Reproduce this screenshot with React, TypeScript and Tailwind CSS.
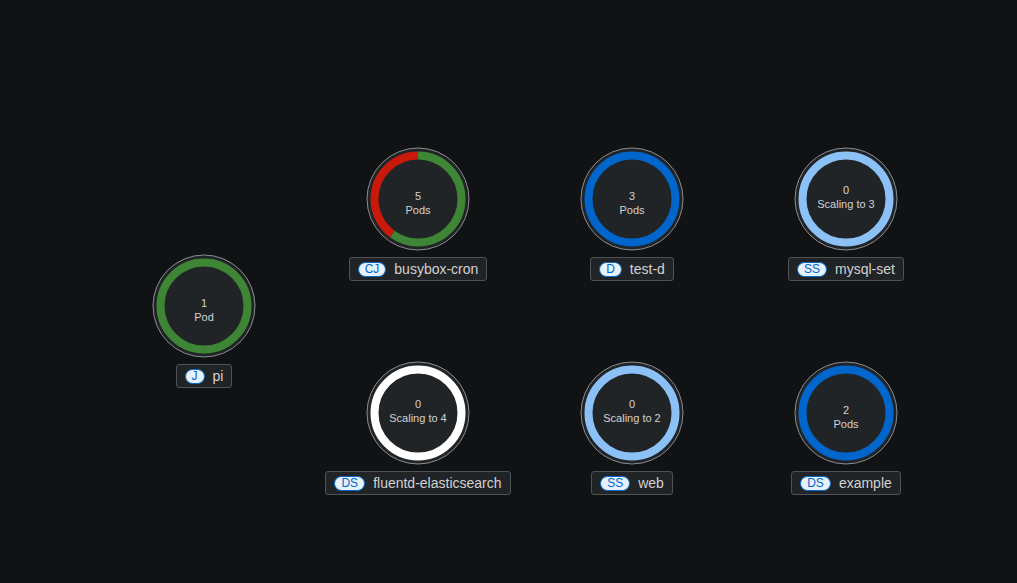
import React from "react";

type Seg = { color: string; value: number };

interface TopoNode {
  id: string;
  kind: string;
  name: string;
  x: number;
  y: number;
  count: string;
  sub: string;
  segs: Seg[];
}

const GREEN = "#3e8635";
const RED = "#c9190b";
const BLUE = "#0066cc";
const LIGHT = "#8bc1f7";

const nodes: TopoNode[] = [
  { id: "pi", kind: "J", name: "pi", x: 204, y: 306, count: "1", sub: "Pod", segs: [{ color: GREEN, value: 1 }] },
  { id: "bb", kind: "CJ", name: "busybox-cron", x: 418, y: 199, count: "5", sub: "Pods", segs: [{ color: GREEN, value: 3 }, { color: RED, value: 2 }] },
  { id: "td", kind: "D", name: "test-d", x: 632, y: 199, count: "3", sub: "Pods", segs: [{ color: BLUE, value: 1 }] },
  { id: "ms", kind: "SS", name: "mysql-set", x: 846, y: 199, count: "0", sub: "Scaling to 3", segs: [{ color: LIGHT, value: 1 }] },
  { id: "fe", kind: "DS", name: "fluentd-elasticsearch", x: 418, y: 413, count: "0", sub: "Scaling to 4", segs: [{ color: "#ffffff", value: 1 }] },
  { id: "web", kind: "SS", name: "web", x: 632, y: 413, count: "0", sub: "Scaling to 2", segs: [{ color: LIGHT, value: 1 }] },
  { id: "ex", kind: "DS", name: "example", x: 846, y: 413, count: "2", sub: "Pods", segs: [{ color: BLUE, value: 1 }] },
];

function Donut({ segs }: { segs: Seg[] }) {
  const r = 43.5;
  const c = 2 * Math.PI * r;
  const total = segs.reduce((s, g) => s + g.value, 0);
  let offset = 0;
  return (
    <svg width="104" height="104" viewBox="0 0 104 104">
      <circle cx="52" cy="52" r="51" fill="#212427" stroke="#8a8d90" strokeWidth="1" />
      <g transform="rotate(-90 52 52)">
        {segs.map((g, i) => {
          const len = (g.value / total) * c;
          const el = (
            <circle
              key={i}
              cx="52"
              cy="52"
              r={r}
              fill="none"
              stroke={g.color}
              strokeWidth="8"
              strokeDasharray={`${len} ${c}`}
              strokeDashoffset={-offset}
            />
          );
          offset += len;
          return el;
        })}
      </g>
    </svg>
  );
}

function Node({ node }: { node: TopoNode }) {
  const scaling = node.sub.startsWith("Scaling");
  return (
    <div
      className="absolute w-[240px] flex flex-col items-center"
      style={{ left: node.x - 120, top: node.y - 52 }}
    >
      <div className="relative w-[104px] h-[104px]">
        <Donut segs={node.segs} />
        <div
          className={
            scaling
              ? "absolute inset-0 flex flex-col items-center justify-center pb-[4px] text-[11px] leading-[14px] text-[#d2d2d2]"
              : "absolute inset-0 flex flex-col items-center justify-center pt-[8px] text-[11px] leading-[14px] text-[#d2d2d2]"
          }
        >
          <span>{node.count}</span>
          <span>{node.sub}</span>
        </div>
      </div>
      <div className="mt-[6px] h-[24px] flex items-center gap-[8px] px-[8px] rounded-[3px] bg-[#212427] border border-[#4f5255]">
        <span className="px-[6px] h-[15px] flex items-center rounded-full bg-[#e7f1fa] border border-[#0066cc] text-[#0066cc] text-[12px] leading-[13px]">
          {node.kind}
        </span>
        <span className="text-[14px] leading-[16px] text-[#d2d2d2]">{node.name}</span>
      </div>
    </div>
  );
}

export default function App() {
  return (
    <div
      className="relative w-[1017px] h-[583px] overflow-hidden bg-[#111214]"
      style={{ fontFamily: '"Liberation Sans", Arial, sans-serif' }}
    >
      {nodes.map((n) => (
        <Node key={n.id} node={n} />
      ))}
    </div>
  );
}
